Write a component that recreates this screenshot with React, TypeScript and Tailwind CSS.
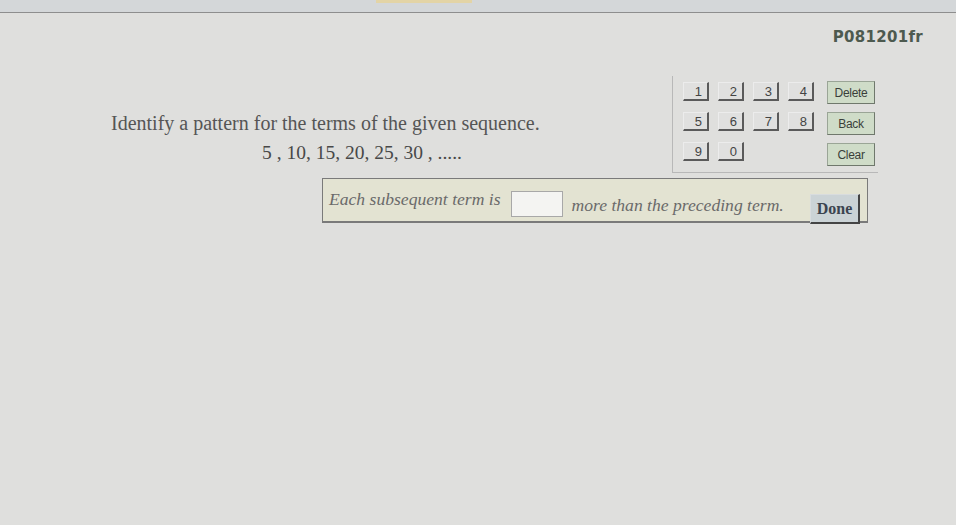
const keys = [
  ['1', '2', '3', '4'],
  ['5', '6', '7', '8'],
  ['9', '0'],
]

const Key = ({ label }: { label: string }) => (
  <div className="flex h-[19px] w-[26px] items-center justify-end border-t border-l border-t-[#ececec] border-l-[#ececec] border-r-2 border-b-2 border-r-[#5a5a5a] border-b-[#5a5a5a] bg-[#e0e0df] pr-[5px] text-[13px] leading-none text-[#444]">
    {label}
  </div>
)

const FnButton = ({ label }: { label: string }) => (
  <div className="flex h-[23px] w-[48px] items-center justify-center border border-[#9aa596] border-r-[#6f786c] border-b-[#6f786c] bg-[#cfdcc8] text-[12px] tracking-[-0.3px] text-[#3a3f3a]">
    {label}
  </div>
)

export default function App() {
  return (
    <div className="flex h-[525px] w-[956px] flex-col overflow-hidden bg-[#dfdfdd] font-['Liberation_Sans',sans-serif]">
      <div className="relative h-[13px] shrink-0 border-b border-[#8e8e8e] bg-[#d4d7d9]">
        <div className="absolute left-[376px] top-0 h-[3px] w-[96px] bg-[#e3d4a6]" />
      </div>

      <div className="flex justify-end pr-[33px] pt-[17px]">
        <span className="font-['DejaVu_Sans',sans-serif] text-[15px] font-bold leading-none tracking-[0.3px] text-[#4d5a4f]">
          P081201fr
        </span>
      </div>

      <div className="mt-[31px] flex">
        <div className="w-[672px] shrink-0 pl-[111px] pt-[36px] font-['Liberation_Serif',serif]">
          <div className="text-[20px] leading-[22px] text-[#555]">
            Identify a pattern for the terms of the given sequence.
          </div>
          <div className="mt-[8px] pl-[151px] text-[19.5px] leading-[22px] text-[#484848]">
            5 , 10, 15, 20, 25, 30 , .....
          </div>
        </div>

        <div className="flex h-[97px] w-[206px] border-l border-b border-[#b8b8b8] pl-[10px]">
          <div className="flex flex-col gap-[11px] pt-[6px]">
            {keys.map((row, i) => (
              <div key={i} className="flex gap-[9px]">
                {row.map((k) => (
                  <Key key={k} label={k} />
                ))}
              </div>
            ))}
          </div>
          <div className="ml-[13px] flex flex-col gap-[8px] pt-[5px]">
            <FnButton label="Delete" />
            <FnButton label="Back" />
            <FnButton label="Clear" />
          </div>
        </div>
      </div>

      <div className="ml-[322px] mt-[5px] flex h-[45px] w-[546px] items-start border border-[#7a7a7a] border-b-2 bg-[#e3e3d2] font-['Liberation_Serif',serif] italic text-[#6a6a6a]">
        <span className="pl-[6px] pt-[10px] text-[17.6px] leading-[20px]">Each subsequent term is</span>
        <div className="ml-[10px] mt-[12px] h-[26px] w-[52px] border border-[#a8a8a8] bg-[#f4f4f2]" />
        <span className="ml-[9px] pt-[16px] text-[17.6px] leading-[20px]">more than the preceding term.</span>
        <div className="ml-auto mr-[7px] mt-[15px] flex h-[30px] w-[50px] items-center justify-center border-t border-l border-[#d8dcde] border-r-2 border-b-2 border-r-[#444] border-b-[#444] bg-[#cbd3d6] text-[16px] font-bold not-italic text-[#3b4450]">
          Done
        </div>
      </div>

      <div className="flex-1" />
    </div>
  )
}
